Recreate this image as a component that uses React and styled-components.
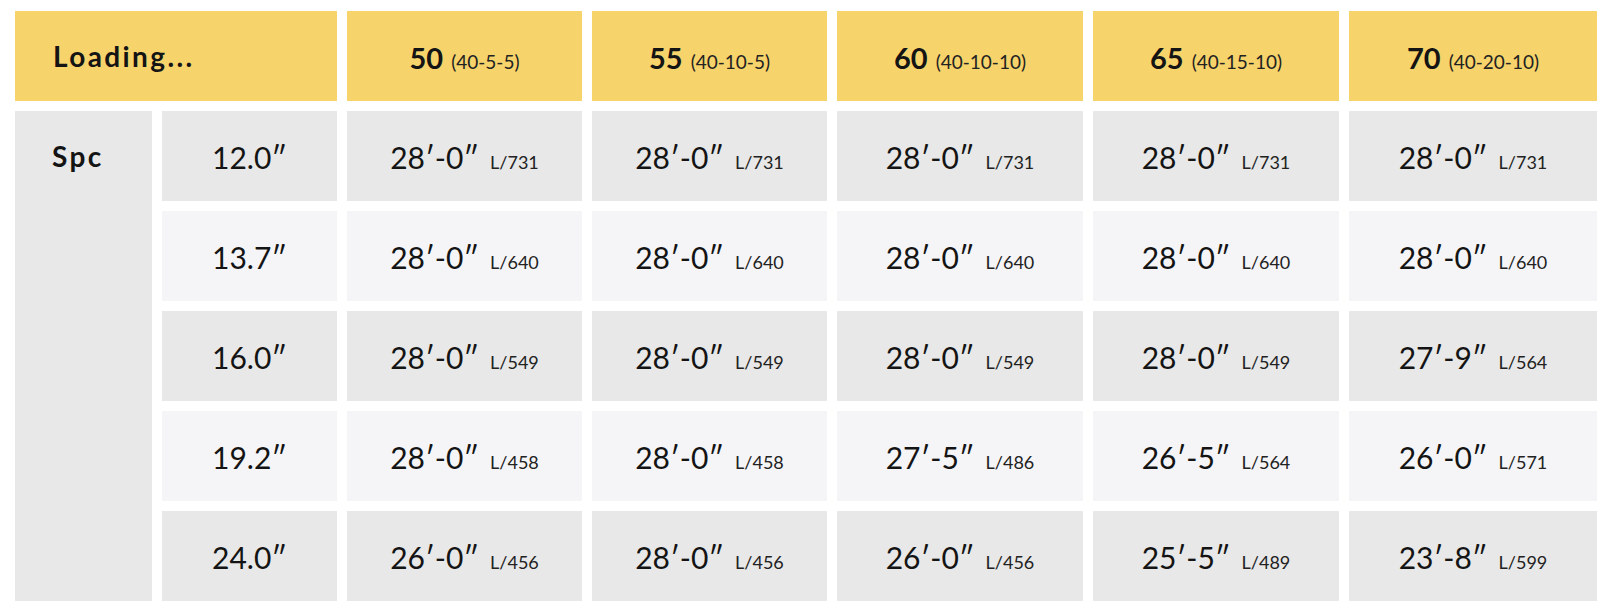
import React from 'react'
import styled, { createGlobalStyle } from 'styled-components'

const GlobalStyle = createGlobalStyle`
  body {
    margin: 0;
    background: #ffffff;
    font-family: 'Lato', 'Liberation Sans', sans-serif;
    color: #141414;
  }
`

const loads = [
  { total: '50', mix: '(40-5-5)' },
  { total: '55', mix: '(40-10-5)' },
  { total: '60', mix: '(40-10-10)' },
  { total: '65', mix: '(40-15-10)' },
  { total: '70', mix: '(40-20-10)' },
]

const rows = [
  { spacing: '12.0″', spans: [['28′-0″', 'L/731'], ['28′-0″', 'L/731'], ['28′-0″', 'L/731'], ['28′-0″', 'L/731'], ['28′-0″', 'L/731']] },
  { spacing: '13.7″', spans: [['28′-0″', 'L/640'], ['28′-0″', 'L/640'], ['28′-0″', 'L/640'], ['28′-0″', 'L/640'], ['28′-0″', 'L/640']] },
  { spacing: '16.0″', spans: [['28′-0″', 'L/549'], ['28′-0″', 'L/549'], ['28′-0″', 'L/549'], ['28′-0″', 'L/549'], ['27′-9″', 'L/564']] },
  { spacing: '19.2″', spans: [['28′-0″', 'L/458'], ['28′-0″', 'L/458'], ['27′-5″', 'L/486'], ['26′-5″', 'L/564'], ['26′-0″', 'L/571']] },
  { spacing: '24.0″', spans: [['26′-0″', 'L/456'], ['28′-0″', 'L/456'], ['26′-0″', 'L/456'], ['25′-5″', 'L/489'], ['23′-8″', 'L/599']] },
]

const Page = styled.div`
  padding: 11px 15px;
`

const Table = styled.div`
  display: grid;
  grid-template-columns: 137px 175px 235px 235px 246px 246px 248px;
  grid-auto-rows: 90px;
  gap: 10px;
`

const LoadingCell = styled.div`
  grid-column: span 2;
  background: #f7d36b;
  display: flex;
  align-items: center;
  padding-left: 38px;
  font-weight: 700;
  font-size: 28px;
  letter-spacing: 2.4px;
`

const HeadCell = styled.div`
  background: #f7d36b;
  display: flex;
  align-items: center;
  justify-content: center;
  padding-top: 2px;
`

const Total = styled.span`
  font-weight: 700;
  font-size: 29px;
`

const Mix = styled.span`
  font-size: 19px;
  margin-left: 8px;
  color: #222;
`

const SideCell = styled.div`
  grid-row: 2 / span 5;
  grid-column: 1;
  background: #e8e8e8;
`

const SideLabel = styled.div`
  height: 90px;
  display: flex;
  align-items: center;
  padding-left: 37px;
  font-weight: 700;
  font-size: 28px;
  letter-spacing: 2.4px;
`

const Cell = styled.div`
  background: ${props => (props.$light ? '#f5f5f7' : '#e8e8e8')};
  display: flex;
  align-items: center;
  justify-content: center;
  font-size: 30px;
  padding-top: 2px;
`

const Span = styled.span`
  font-size: 30px;
`

const Ratio = styled.span`
  font-size: 18px;
  margin-left: 11px;
  color: #222;
`

export default function App() {
  return (
    <Page>
      <GlobalStyle />
      <Table>
        <LoadingCell>Loading...</LoadingCell>
        {loads.map(load => (
          <HeadCell key={load.total}>
            <span>
              <Total>{load.total}</Total>
              <Mix>{load.mix}</Mix>
            </span>
          </HeadCell>
        ))}
        <SideCell>
          <SideLabel>Spc</SideLabel>
        </SideCell>
        {rows.map((row, i) => (
          <React.Fragment key={row.spacing}>
            <Cell $light={i % 2 === 1}>{row.spacing}</Cell>
            {row.spans.map(([span, ratio], j) => (
              <Cell key={j} $light={i % 2 === 1}>
                <span>
                  <Span>{span}</Span>
                  <Ratio>{ratio}</Ratio>
                </span>
              </Cell>
            ))}
          </React.Fragment>
        ))}
      </Table>
    </Page>
  )
}
